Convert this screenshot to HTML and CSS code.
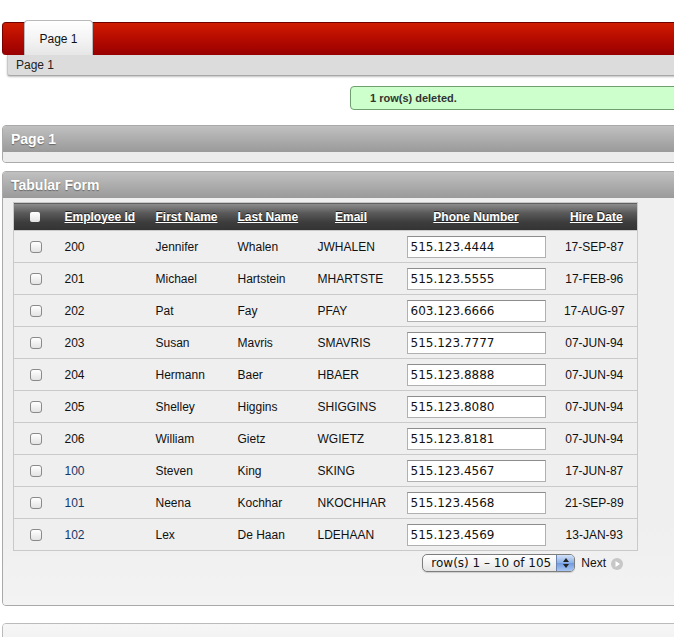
FILE: index.html
```html
<!DOCTYPE html>
<html>
<head>
<meta charset="utf-8">
<title>Page 1</title>
<link rel="stylesheet" href="styles.css">
</head>
<body>
<div class="page">
  <div class="tabbar">
    <div class="tab">Page 1</div>
  </div>
  <div class="crumbs">Page 1</div>

  <div class="message">1 row(s) deleted.</div>

  <div class="region region-small">
    <div class="region-head">Page 1</div>
    <div class="region-body small-body"></div>
  </div>

  <div class="region">
    <div class="region-head">Tabular Form</div>
    <div class="region-body form-body">
      <table class="grid">
        <colgroup>
          <col class="c1"><col class="c2"><col class="c3"><col class="c4"><col class="c5"><col class="c6"><col class="c7">
        </colgroup>
        <thead>
          <tr>
            <th class="chk"><span class="hcheck"></span></th>
            <th class="left"><a>Employee Id</a></th>
            <th class="left"><a>First Name</a></th>
            <th class="left"><a>Last Name</a></th>
            <th><a>Email</a></th>
            <th><a>Phone Number</a></th>
            <th><a>Hire Date</a></th>
          </tr>
        </thead>
        <tbody>
          <tr><td class="chk"><span class="cbox"></span></td><td>200</td><td>Jennifer</td><td>Whalen</td><td>JWHALEN</td><td class="ph"><span class="field">515.123.4444</span></td><td class="date">17-SEP-87</td></tr>
          <tr><td class="chk"><span class="cbox"></span></td><td>201</td><td>Michael</td><td>Hartstein</td><td>MHARTSTE</td><td class="ph"><span class="field">515.123.5555</span></td><td class="date">17-FEB-96</td></tr>
          <tr><td class="chk"><span class="cbox"></span></td><td>202</td><td>Pat</td><td>Fay</td><td>PFAY</td><td class="ph"><span class="field">603.123.6666</span></td><td class="date">17-AUG-97</td></tr>
          <tr><td class="chk"><span class="cbox"></span></td><td>203</td><td>Susan</td><td>Mavris</td><td>SMAVRIS</td><td class="ph"><span class="field">515.123.7777</span></td><td class="date">07-JUN-94</td></tr>
          <tr><td class="chk"><span class="cbox"></span></td><td>204</td><td>Hermann</td><td>Baer</td><td>HBAER</td><td class="ph"><span class="field">515.123.8888</span></td><td class="date">07-JUN-94</td></tr>
          <tr><td class="chk"><span class="cbox"></span></td><td>205</td><td>Shelley</td><td>Higgins</td><td>SHIGGINS</td><td class="ph"><span class="field">515.123.8080</span></td><td class="date">07-JUN-94</td></tr>
          <tr><td class="chk"><span class="cbox"></span></td><td>206</td><td>William</td><td>Gietz</td><td>WGIETZ</td><td class="ph"><span class="field">515.123.8181</span></td><td class="date">07-JUN-94</td></tr>
          <tr><td class="chk"><span class="cbox"></span></td><td class="blue">100</td><td>Steven</td><td>King</td><td>SKING</td><td class="ph"><span class="field">515.123.4567</span></td><td class="date">17-JUN-87</td></tr>
          <tr><td class="chk"><span class="cbox"></span></td><td class="blue">101</td><td>Neena</td><td>Kochhar</td><td>NKOCHHAR</td><td class="ph"><span class="field">515.123.4568</span></td><td class="date">21-SEP-89</td></tr>
          <tr><td class="chk"><span class="cbox"></span></td><td class="blue">102</td><td>Lex</td><td>De Haan</td><td>LDEHAAN</td><td class="ph"><span class="field">515.123.4569</span></td><td class="date">13-JAN-93</td></tr>
        </tbody>
      </table>
      <div class="pager">
        <div class="select">
          <span class="select-text">row(s) 1 – 10 of 105</span>
          <span class="select-btn">
            <svg width="8" height="12" viewBox="0 0 8 12"><path d="M4 1 L7 5 L1 5 Z" fill="#222"/><path d="M1 7 L7 7 L4 11 Z" fill="#222"/></svg>
          </span>
        </div>
        <span class="next">Next</span>
        <svg class="next-icon" width="12" height="12" viewBox="0 0 12 12"><circle cx="6" cy="6" r="6" fill="#c7c7c7"/><path d="M4.5 3 L9 6 L4.5 9 Z" fill="#fff"/></svg>
      </div>
    </div>
  </div>

  <div class="region region-last">
    <div class="region-body last-body"></div>
  </div>
</div>
</body>
</html>
```

FILE: styles.css
```css
html, body {
  margin: 0;
  padding: 0;
  overflow: hidden;
  background: #fff;
}
body {
  font-family: "Liberation Sans", Arial, sans-serif;
  font-size: 12px;
  color: #111;
}
.page {
  width: 700px;
  padding: 20px 0 0 2px;
}

/* top tab bar */
.tabbar {
  margin-top: 2px;
  height: 32px;
  border-top: 1px solid #6e0000;
  border-left: 1px solid #7a0000;
  border-radius: 4px 0 0 4px;
  background: linear-gradient(to bottom, #cf1c00 0%, #b80c00 45%, #980000 100%);
  padding-left: 21px;
  display: flex;
  align-items: flex-end;
}
.tab {
  width: 69px;
  height: 35px;
  margin-top: -3px;
  border: 1px solid #b9b9b9;
  border-bottom: none;
  border-radius: 4px 4px 0 0;
  background: linear-gradient(to bottom, #ffffff 0%, #f2f2f2 60%, #e6e6e6 100%);
  display: flex;
  align-items: center;
  justify-content: center;
  padding-top: 1px;
  box-sizing: border-box;
  color: #111;
  font-size: 12px;
}
.crumbs {
  margin-left: 5px;
  height: 20px;
  line-height: 20px;
  padding-left: 8px;
  background: #dcdcdc;
  border-left: 1px solid #c8c8c8;
  border-bottom: 1px solid #a8a8a8;
  border-radius: 0 0 0 3px;
  box-shadow: 0 1px 2px rgba(0,0,0,0.25);
  color: #222;
}

/* success message */
.message {
  margin: 10px 0 0 348px;
  height: 22px;
  line-height: 22px;
  border: 1px solid #6f9f6f;
  border-radius: 4px;
  background: #ccffcc;
  padding-left: 19px;
  font-size: 11px;
  font-weight: bold;
  color: #333;
}

/* regions */
.region {
  margin-top: 8px;
  border: 1px solid #a9a9a9;
  border-radius: 4px;
  background: #efefef;
  overflow: hidden;
}
.region-small {
  margin-top: 15px;
}
.region-head {
  height: 26px;
  line-height: 27px;
  padding-left: 8px;
  background: linear-gradient(to bottom, #c0c0c0 0%, #a9a9a9 60%, #9a9a9a 100%);
  color: #fff;
  font-weight: bold;
  font-size: 14px;
  text-shadow: 0 1px 1px #666;
}
.small-body {
  height: 10px;
  background: #ececec;
}
.form-body {
  padding: 4px 0 33px 10px;
  background: linear-gradient(to bottom, #efefef 0%, #efefef 80%, #f3f3f3 100%);
}

/* grid */
.grid {
  width: 624px;
  table-layout: fixed;
  border-collapse: collapse;
  border: 1px solid #c9c9c9;
  background: #efefef;
}
.c1 { width: 39px; }
.c2 { width: 91px; }
.c3 { width: 82px; }
.c4 { width: 80px; }
.c5 { width: 91px; }
.c6 { width: 159px; }
.c7 { width: 82px; }

.grid th {
  height: 27px;
  padding: 0;
  background: linear-gradient(to bottom, #8e8e8e 0%, #5a5a5a 35%, #3c3c3c 70%, #333 100%);
  color: #fff;
  font-weight: bold;
  font-size: 12px;
  text-align: center;
  vertical-align: middle;
}
.grid th a {
  text-decoration: underline;
  text-shadow: 0 -1px 0 #222;
}
.grid th.left {
  text-align: left;
  padding-left: 12px;
}
.grid th.chk {
  text-align: left;
  padding-left: 16px;
}
.hcheck {
  display: inline-block;
  width: 10px;
  height: 10px;
  border-radius: 2px;
  background: linear-gradient(to bottom, #fff, #e2e2e2);
  vertical-align: middle;
}

.grid td {
  height: 31px;
  padding: 0 0 0 12px;
  border-top: 1px solid #cacaca;
  vertical-align: middle;
  white-space: nowrap;
  overflow: hidden;
}
.grid td.chk {
  padding-left: 16px;
}
.grid td.blue {
  color: #13386a;
}
.grid td.ph {
  padding-left: 10px;
}
.grid td.date {
  padding: 0 4px 0 0;
  text-align: center;
}
.cbox {
  display: inline-block;
  width: 10px;
  height: 10px;
  border: 1px solid #8a8a8a;
  border-radius: 3px;
  background: linear-gradient(to bottom, #ffffff, #e3e3e3);
  vertical-align: middle;
}
.field {
  display: block;
  width: 134px;
  height: 20px;
  line-height: 21px;
  border: 1px solid #b0b0b0;
  border-top-color: #8c8c8c;
  background: #fff;
  padding-left: 3px;
  font-family: "DejaVu Sans", "Liberation Sans", sans-serif;
  font-size: 12px;
  color: #111;
}

/* pager */
.pager {
  width: 610px;
  display: flex;
  justify-content: flex-end;
  align-items: center;
  margin-top: 3px;
}
.select {
  display: flex;
  width: 151px;
  height: 16px;
  border: 1px solid #7d7d7d;
  border-radius: 5px;
  overflow: hidden;
  background: linear-gradient(to bottom, #ffffff, #f0f0f0 60%, #e4e4e4);
  box-shadow: 0 1px 1px rgba(0,0,0,0.15);
}
.select-text {
  flex: 1;
  padding-left: 8px;
  line-height: 17px;
  font-family: "DejaVu Sans", "Liberation Sans", sans-serif;
  font-size: 12px;
  color: #111;
}
.select-btn {
  width: 17px;
  border-left: 1px solid #6a84b0;
  background: linear-gradient(to bottom, #d2e1f7, #8cb0e6 50%, #6f9ae0 51%, #a9c6f1);
  display: flex;
  align-items: center;
  justify-content: center;
}
.next {
  margin-left: 6px;
  font-size: 12px;
  color: #111;
}
.next-icon {
  margin-left: 5px;
  margin-top: 2px;
}

.region-last {
  margin-top: 17px;
  border-color: #bbb;
}
.last-body {
  height: 30px;
  background: linear-gradient(to bottom, #f6f6f6, #efefef);
}
```
